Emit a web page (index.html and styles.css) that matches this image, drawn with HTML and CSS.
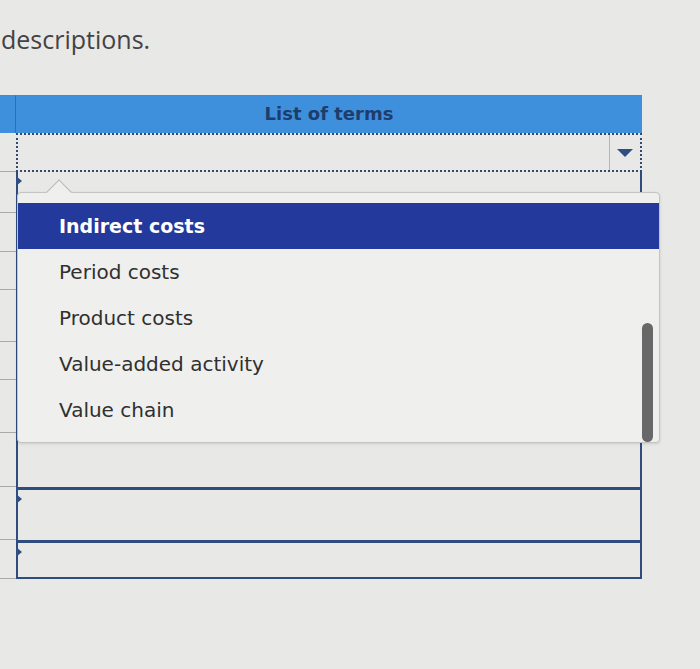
FILE: index.html
```html
<!DOCTYPE html>
<html lang="en">
<head>
    <meta charset="UTF-8">
    <title>List of terms</title>
    <link rel="stylesheet" href="styles.css">
</head>
<body>
    <p class="lead">descriptions.</p>

    <div class="sheet">
        <div class="side head"></div>
        <div class="main head">List of terms</div>

        <div class="side"></div>
        <div class="main pick">
            <span class="pick-btn"><span class="tri"></span></span>
        </div>

        <div class="side"></div>
        <div class="main first mark"></div>
        <div class="side"></div>
        <div class="main"></div>
        <div class="side"></div>
        <div class="main"></div>
        <div class="side"></div>
        <div class="main"></div>
        <div class="side"></div>
        <div class="main"></div>
        <div class="side"></div>
        <div class="main"></div>
        <div class="side"></div>
        <div class="main"></div>
        <div class="side"></div>
        <div class="main mark"></div>
        <div class="side"></div>
        <div class="main mark last"></div>

        <!-- open dropdown list -->
        <div class="popup">
            <div class="opt on">Indirect costs</div>
            <div class="opt">Period costs</div>
            <div class="opt">Product costs</div>
            <div class="opt">Value-added activity</div>
            <div class="opt">Value chain</div>
            <div class="scroll"></div>
        </div>
    </div>
</body>
</html>
```

FILE: styles.css
```css
body {
    margin: 0;
    background: #e8e8e6;
    font-family: "DejaVu Sans", Verdana, sans-serif;
}
.lead {
    margin: 0;
    padding: 22px 0 0 1px;
    font: 25px/34px "Open Sans", sans-serif;
    color: #434343;
}
.sheet {
    position: relative;
    margin-top: 39px;
    width: 642px;
    display: grid;
    grid-template-columns: 16px 626px;
    grid-template-rows: 38px 39px 41px 39px 38px 52px 38px 53px 54px 53px 39px;
}
.side {
    border-bottom: 1px solid #a9a9a9;
}
.main {
    position: relative;
    box-sizing: border-box;
    border-left: 2px solid #2f4c80;
    border-right: 2px solid #2f4c80;
    border-top: 3px solid #2f4c80;
}
.main.first {
    border-top: none;
}
.main.last {
    border-bottom: 2px solid #2f4c80;
}
.head {
    background: #3e90dc;
    border-top: 1px solid #5b86b0;
    border-bottom: none;
}
.side.head {
    border-right: 1px solid #2f6eaa;
}
.main.head {
    border: none;
    border-top: 1px solid #5b86b0;
    display: flex;
    align-items: center;
    justify-content: center;
    color: #1f3d6c;
    font-size: 18px;
    font-weight: bold;
    padding-bottom: 2px;
}
.main.pick {
    border: 2px dotted #34496c;
    display: flex;
    justify-content: flex-end;
}
.pick-btn {
    width: 30px;
    border-left: 1px solid #b5b5b5;
    display: flex;
    align-items: center;
    justify-content: center;
}
.tri {
    width: 0;
    height: 0;
    border-left: 8px solid transparent;
    border-right: 8px solid transparent;
    border-top: 8px solid #2f4f80;
}
.mark::before {
    content: '';
    position: absolute;
    left: -2px;
    top: 4px;
    border-top: 5px solid transparent;
    border-bottom: 5px solid transparent;
    border-left: 6px solid #2f4f80;
}
.popup {
    position: absolute;
    left: 17px;
    top: 97px;
    width: 643px;
    height: 251px;
    box-sizing: border-box;
    padding: 10px 0;
    background: #efefed;
    border: 1px solid #c4c4c2;
    border-radius: 4px;
    box-shadow: 0 1px 3px rgba(0,0,0,0.12);
}
.popup::before {
    content: '';
    position: absolute;
    top: -10px;
    left: 32px;
    width: 17px;
    height: 17px;
    background: #efefed;
    border-left: 1px solid #b8b8b6;
    border-top: 1px solid #b8b8b6;
    transform: rotate(45deg);
}
.opt {
    position: relative;
    height: 46px;
    display: flex;
    align-items: center;
    padding-left: 41px;
    font-size: 20px;
    color: #303030;
}
.opt.on {
    background: #23399b;
    color: #fff;
    font-weight: bold;
    font-size: 19px;
}
.scroll {
    position: absolute;
    right: 6px;
    top: 130px;
    width: 11px;
    height: 119px;
    background: #686868;
    border-radius: 6px;
}
```
